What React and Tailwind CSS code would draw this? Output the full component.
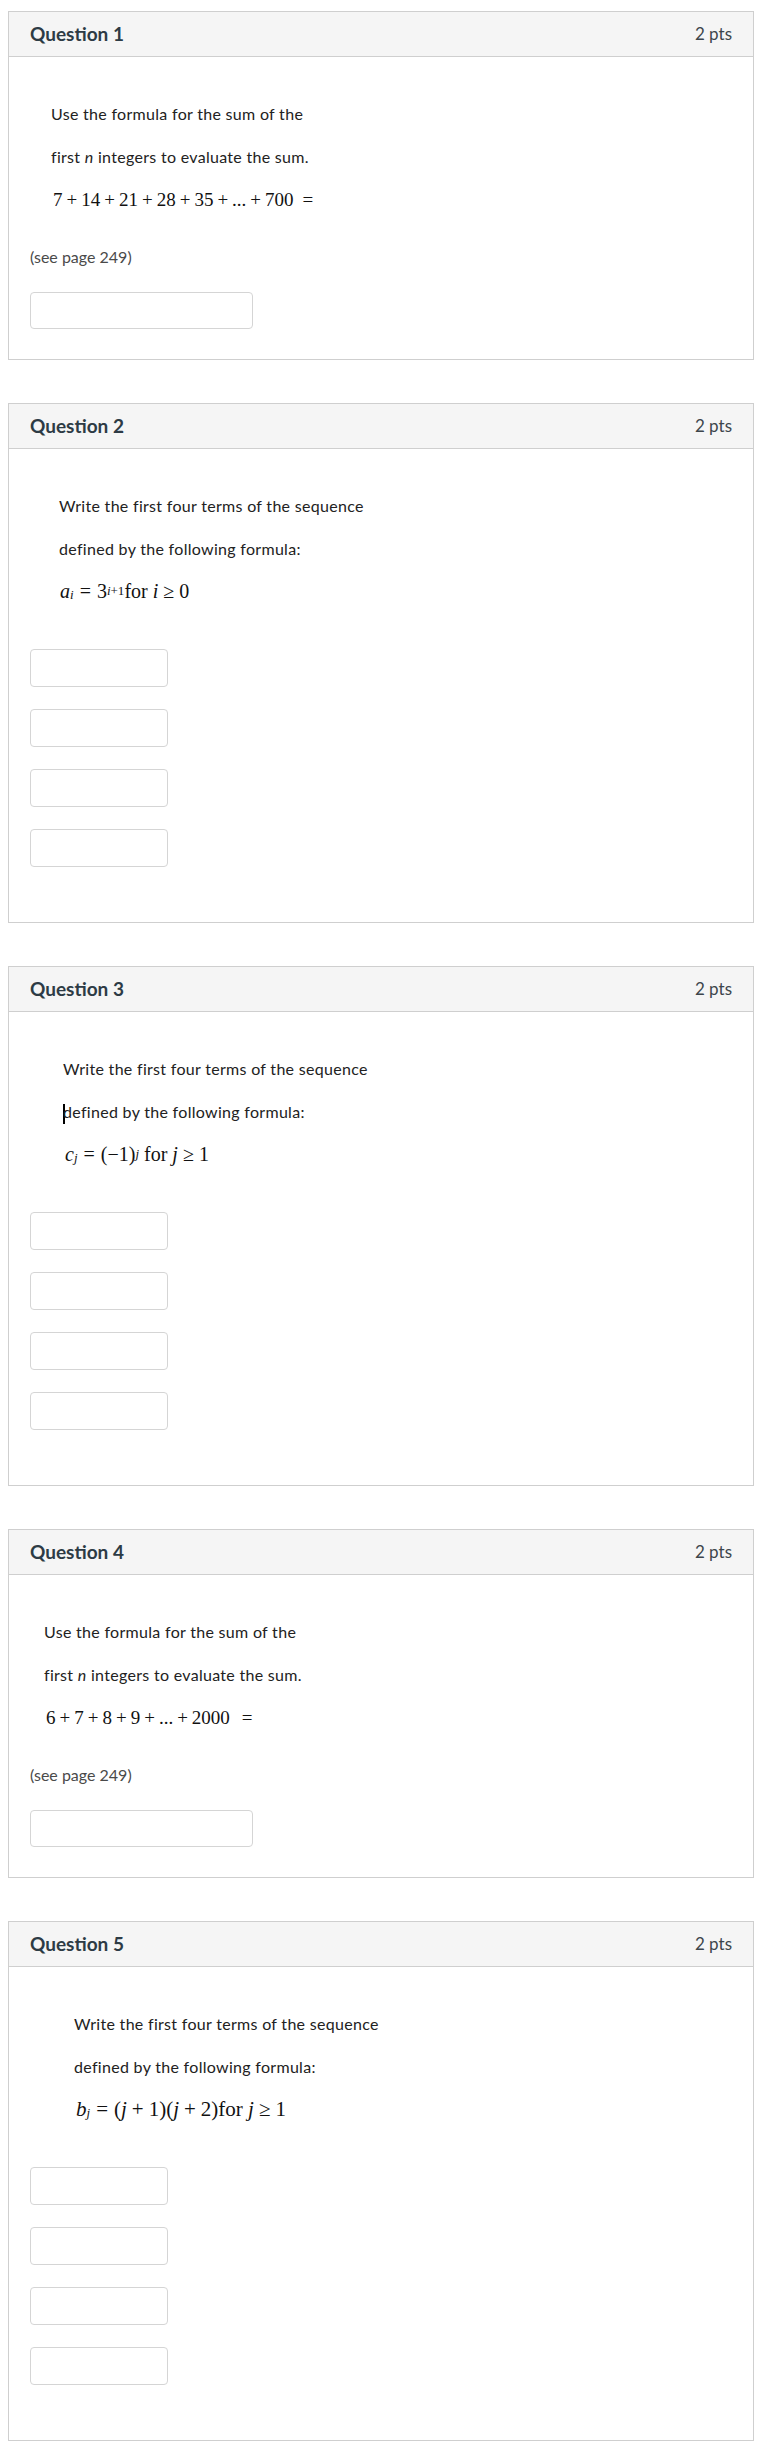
const lato = { fontFamily: "Lato, 'Open Sans', sans-serif" };
const serif = { fontFamily: "'Liberation Serif', 'Times New Roman', serif" };

function Sup({ children }) {
  return <sup className="text-[13px] relative -top-[3px]">{children}</sup>;
}

function Sub({ children }) {
  return <sub className="text-[13px] italic relative top-[1px]">{children}</sub>;
}

function Op({ wide, children }) {
  return <span className={wide ? "mx-[5px]" : "mx-[4px]"}>{children}</span>;
}

function AnswerBox({ wide }) {
  return (
    <input
      type="text"
      className={`${wide ? "w-[223px] h-[37px]" : "w-[138px] h-[38px]"} block border border-[#d5d5d5] rounded-[4px] bg-white`}
    />
  );
}

function Card({ title, children }) {
  return (
    <div className="border border-[#cfcfcf] bg-white">
      <div
        className="h-[45px] flex items-center justify-between px-[21px] bg-[#f5f5f5] border-b border-[#cfcfcf]"
        style={lato}
      >
        <span className="text-[19px] font-bold text-[#2d3b45]">{title}</span>
        <span className="text-[17px] text-[#3d454c]">2 pts</span>
      </div>
      {children}
    </div>
  );
}

function Prompt({ indent, lines, formula, formulaClass }) {
  return (
    <div className={indent} style={lato}>
      {lines.map((l, i) => (
        <div
          key={i}
          className="leading-[43px] text-[16px] tracking-[0.3px] text-[#222] whitespace-nowrap"
        >
          {l}
        </div>
      ))}
      <div
        className={`leading-[43px] text-[#111] whitespace-nowrap ${formulaClass}`}
        style={serif}
      >
        {formula}
      </div>
    </div>
  );
}

function SumQuestion({ title, indent, formula }) {
  return (
    <Card title={title}>
      <div className="px-[21px] pt-[35px] pb-[30px]">
        <Prompt
          indent={indent}
          formulaClass="ml-[2px] text-[19px]"
          lines={[
            "Use the formula for the sum of the",
            <>
              first <i>n</i> integers to evaluate the sum.
            </>,
          ]}
          formula={formula}
        />
        <div className="mt-[26px] leading-[20px] text-[16px] text-[#4a4a4a]" style={lato}>
          (see page 249)
        </div>
        <div className="mt-[25px]">
          <AnswerBox wide />
        </div>
      </div>
    </Card>
  );
}

function SequenceQuestion({ title, indent, formulaClass, formula, cursor }) {
  return (
    <Card title={title}>
      <div className="px-[21px] pt-[35px] pb-[55px]">
        <Prompt
          indent={indent}
          formulaClass={formulaClass}
          lines={[
            "Write the first four terms of the sequence",
            cursor ? (
              <>
                <span className="inline-block w-[2px] h-[20px] bg-black align-middle -mr-[2px]" />
                defined by the following formula:
              </>
            ) : (
              "defined by the following formula:"
            ),
          ]}
          formula={formula}
        />
        <div className="mt-[36px] flex flex-col gap-[22px]">
          <AnswerBox />
          <AnswerBox />
          <AnswerBox />
          <AnswerBox />
        </div>
      </div>
    </Card>
  );
}

export default function App() {
  return (
    <div className="bg-white min-h-screen px-2 pt-[11px] pb-[6px] flex flex-col gap-[43px]">
      <SumQuestion
        title="Question 1"
        indent="ml-[21px]"
        formula={
          <>
            7<Op>+</Op>14<Op>+</Op>21<Op>+</Op>28<Op>+</Op>35<Op>+</Op>...<Op>+</Op>700
            <span className="ml-[9px]">=</span>
          </>
        }
      />
      <SequenceQuestion
        title="Question 2"
        indent="ml-[29px]"
        formulaClass="ml-[1px] text-[20px]"
        formula={
          <>
            <i>a</i>
            <Sub>i</Sub>
            <span className="mx-[6px]">=</span>3
            <Sup>
              <i>i</i>+1
            </Sup>
            for <i>i</i>
            <span className="mx-[5px]">≥</span>0
          </>
        }
      />
      <SequenceQuestion
        title="Question 3"
        indent="ml-[33px]"
        formulaClass="ml-[2px] text-[20px]"
        cursor
        formula={
          <>
            <i>c</i>
            <Sub>j</Sub>
            <span className="mx-[6px]">=</span>(−1)
            <Sup>
              <i>j</i>
            </Sup>{" "}
            for <i>j</i>
            <span className="mx-[5px]">≥</span>1
          </>
        }
      />
      <SumQuestion
        title="Question 4"
        indent="ml-[14px]"
        formula={
          <>
            6<Op>+</Op>7<Op>+</Op>8<Op>+</Op>9<Op>+</Op>...<Op>+</Op>2000
            <span className="ml-[12px]">=</span>
          </>
        }
      />
      <SequenceQuestion
        title="Question 5"
        indent="ml-[44px]"
        formulaClass="ml-[2px] text-[21px]"
        formula={
          <>
            <i>b</i>
            <Sub>j</Sub>
            <span className="mx-[6px]">=</span>(<i>j</i>
            <Op wide>+</Op>1)(<i>j</i>
            <Op wide>+</Op>2)for <i>j</i>
            <span className="mx-[5px]">≥</span>1
          </>
        }
      />
    </div>
  );
}
